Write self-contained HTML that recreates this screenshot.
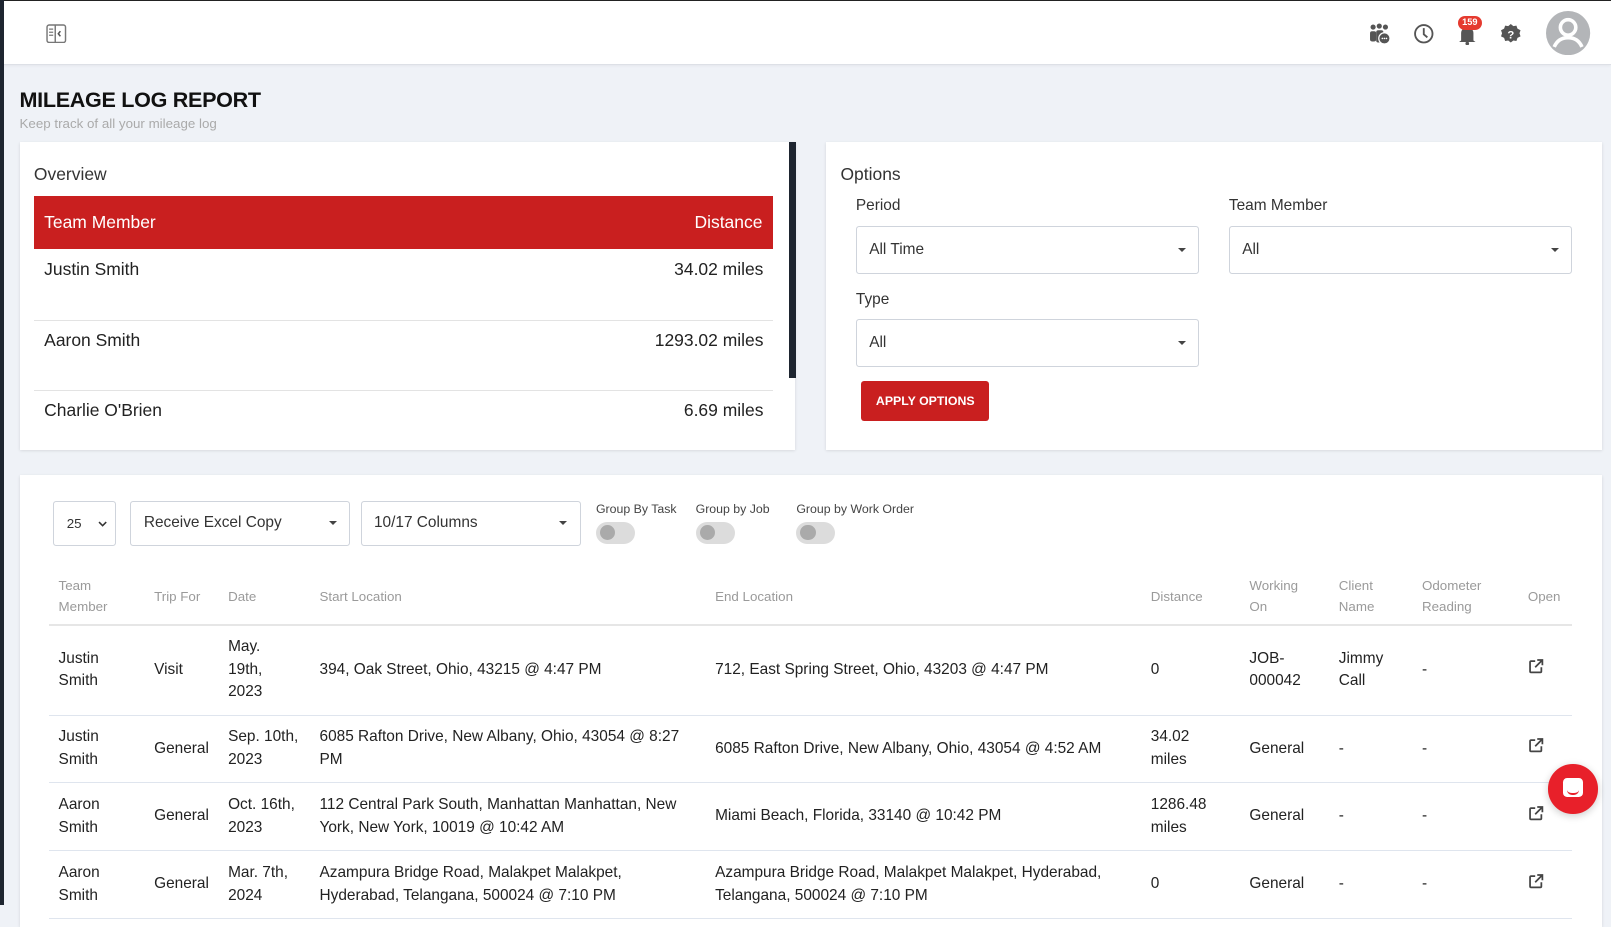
<!DOCTYPE html>
<html><head><meta charset="utf-8">
<style>
html{zoom:1.0275}
body{margin:0;width:1568px;height:881px;overflow:hidden;background:#eff2f7;font-family:"Liberation Sans",Arial,sans-serif;position:relative;color:#222}
.abs{position:absolute}
.top{left:0;top:0;width:1568px;height:63px;background:#fff;border-top:1px solid #222;border-bottom:1px solid #dde0e6;box-sizing:border-box;box-shadow:0 1px 3px rgba(0,0,0,.06)}
.strip{left:0;top:0;width:4px;height:881px;background:#1e2530;z-index:5}
.card{background:#fff;box-shadow:0 1px 3px rgba(0,0,0,.12)}
.sel{position:absolute;border:1px solid #cfd4dc;border-radius:3px;background:#fff;box-sizing:border-box;font-size:15px;color:#333;padding-left:12px;display:flex;align-items:center}
.sel .car{position:absolute;right:12px;top:50%;margin-top:-2px;border-left:4px solid transparent;border-right:4px solid transparent;border-top:4px solid #444}
table{border-collapse:collapse;table-layout:fixed;position:absolute;left:48px;top:555px;width:1482px;font-size:15px}
td,th{padding:0 4px 0 9px;text-align:left;vertical-align:middle;line-height:22px}
th{font-weight:normal;color:#9a9a9a;font-size:13px;line-height:20px;height:52px;border-bottom:2px solid #e6e6e6}
th.w,td.w{padding-right:30px}
tr.r td{border-bottom:1px solid #dfe5ee}
.tg{position:absolute;width:38px;height:21px;border-radius:11px;background:#dcdcdc}
.tg:after{content:"";position:absolute;left:4px;top:3px;width:15px;height:15px;border-radius:50%;background:#aaa}
.tl{position:absolute;font-size:12px;color:#444;top:489px}
</style></head><body>
<div class="abs strip"></div>
<div class="abs top"></div>
<svg class="abs" style="left:45px;top:23px" width="20" height="19" viewBox="0 0 20 19"><rect x="1" y="1" width="18" height="17" rx="2" fill="none" stroke="#777" stroke-width="1.4"/><line x1="9" y1="1" x2="9" y2="18" stroke="#777" stroke-width="1.4"/><path d="M3 5h4M3 8h4M3 11h4" stroke="#777" stroke-width="1.2"/><path d="M14 7l-2 2.5 2 2.5" fill="none" stroke="#555" stroke-width="1.5"/></svg>
<svg class="abs" style="left:1332px;top:22px" width="22" height="22" viewBox="0 0 22 22"><circle cx="4" cy="4" r="2.5" fill="#555"/><circle cx="10" cy="3" r="2.5" fill="#555"/><circle cx="16" cy="4" r="2.5" fill="#555"/><rect x="1" y="8" width="6" height="10" rx="2" fill="#555"/><rect x="7" y="7" width="7" height="12" rx="2" fill="#555"/><circle cx="15" cy="15" r="5.5" fill="#555" stroke="#fff" stroke-width="1.2"/><circle cx="13" cy="15" r=".8" fill="#fff"/><circle cx="15" cy="15" r=".8" fill="#fff"/><circle cx="17" cy="15" r=".8" fill="#fff"/></svg>
<svg class="abs" style="left:1375px;top:22px" width="21" height="21" viewBox="0 0 21 21"><circle cx="10.5" cy="10.5" r="8.5" fill="none" stroke="#555" stroke-width="1.8"/><path d="M10.5 5v6l3.5 3" fill="none" stroke="#555" stroke-width="1.8"/></svg>
<svg class="abs" style="left:1418px;top:22px" width="20" height="22" viewBox="0 0 20 22"><path d="M4 17V10a6 6 0 0 1 12 0v7l2 1.5H2z" fill="#555"/><circle cx="10" cy="20" r="1.8" fill="#555"/></svg>
<div class="abs" style="left:1419px;top:16px;background:#e53a2f;color:#fff;font-size:9px;font-weight:bold;border-radius:8px;padding:1px 4px;line-height:11px">159</div>
<svg class="abs" style="left:1460px;top:22px" width="21" height="21" viewBox="0 0 21 21"><path d="M10.5 1l2.5 2 3-.5 1 3 3 1.5-1 3 1 3-3 1.5-1 3-3-.5-2.5 2-2.5-2-3 .5-1-3-3-1.5 1-3-1-3 3-1.5 1-3 3 .5z" fill="#555"/><text x="10.5" y="15" font-size="11" font-weight="bold" fill="#fff" text-anchor="middle" font-family="Liberation Sans">?</text></svg>
<svg class="abs" style="left:1505px;top:11px" width="43" height="43" viewBox="0 0 43 43"><circle cx="21.5" cy="21.5" r="21.5" fill="#b3b5b8"/><circle cx="21.5" cy="16" r="7.5" fill="none" stroke="#fff" stroke-width="3.5"/><path d="M8 35c3-7 8-9 13.5-9s10.5 2 13.5 9" fill="none" stroke="#fff" stroke-width="3.5"/></svg>

<div class="abs" style="left:19px;top:85px;font-size:21px;font-weight:bold;color:#111;letter-spacing:-0.3px">MILEAGE LOG REPORT</div>
<div class="abs" style="left:19px;top:113px;font-size:13px;color:#aaa">Keep track of all your mileage log</div>

<div class="abs card" style="left:19px;top:138px;width:755px;height:300px"></div>
<div class="abs" style="left:768px;top:138px;width:7px;height:230px;background:#1e2530"></div>
<div class="abs" style="left:33px;top:160px;font-size:17px;color:#333">Overview</div>
<div class="abs" style="left:33px;top:191px;width:719px;height:51px;background:#c91f1f;color:#fff;font-size:17px"><span class="abs" style="left:10px;top:15px">Team Member</span><span class="abs" style="right:10px;top:15px">Distance</span></div>
<div class="abs" style="left:43px;top:252px;font-size:17px">Justin Smith</div><div class="abs" style="right:825px;top:252px;font-size:17px">34.02 miles</div>
<div class="abs" style="left:33px;top:311px;width:719px;height:1px;background:#e3e3e3"></div>
<div class="abs" style="left:43px;top:321px;font-size:17px">Aaron Smith</div><div class="abs" style="right:825px;top:321px;font-size:17px">1293.02 miles</div>
<div class="abs" style="left:33px;top:380px;width:719px;height:1px;background:#e3e3e3"></div>
<div class="abs" style="left:43px;top:389px;font-size:17px">Charlie O'Brien</div><div class="abs" style="right:825px;top:389px;font-size:17px">6.69 miles</div>

<div class="abs card" style="left:804px;top:138px;width:755px;height:300px"></div>
<div class="abs" style="left:818px;top:160px;font-size:17px;color:#333">Options</div>
<div class="abs" style="left:833px;top:192px;font-size:15px;color:#333">Period</div>
<div class="abs" style="left:1196px;top:192px;font-size:15px;color:#333">Team Member</div>
<div class="sel" style="left:833px;top:220px;width:334px;height:47px">All Time<span class="car"></span></div>
<div class="sel" style="left:1196px;top:220px;width:334px;height:47px">All<span class="car"></span></div>
<div class="abs" style="left:833px;top:283px;font-size:15px;color:#333">Type</div>
<div class="sel" style="left:833px;top:310px;width:334px;height:47px">All<span class="car"></span></div>
<div class="abs" style="left:838px;top:371px;width:125px;height:39px;background:#c91f1f;border-radius:3px;color:#fff;font-size:12px;font-weight:bold;text-align:center;line-height:39px">APPLY OPTIONS</div>

<div class="abs card" style="left:19px;top:462px;width:1540px;height:440px"></div>
<div class="sel" style="left:52px;top:488px;width:61px;height:43px;font-size:13px">25<svg class="abs" style="right:8px;top:18px" width="9" height="6" viewBox="0 0 9 6"><path d="M1 1l3.5 3.5L8 1" fill="none" stroke="#333" stroke-width="1.5"/></svg></div>
<div class="sel" style="left:127px;top:488px;width:214px;height:43px">Receive Excel Copy<span class="car"></span></div>
<div class="sel" style="left:351px;top:488px;width:214px;height:43px">10/17 Columns<span class="car"></span></div>
<div class="tl" style="left:580px">Group By Task</div><div class="tg" style="left:580px;top:508px"></div>
<div class="tl" style="left:677px">Group by Job</div><div class="tg" style="left:677px;top:508px"></div>
<div class="tl" style="left:775px">Group by Work Order</div><div class="tg" style="left:775px;top:508px"></div>

<table>
<colgroup><col style="width:93px"><col style="width:72px"><col style="width:89px"><col style="width:385px"><col style="width:424px"><col style="width:96px"><col style="width:87px"><col style="width:81px"><col style="width:103px"><col style="width:52px"></colgroup>
<tr><th class="w">Team Member</th><th>Trip For</th><th>Date</th><th>Start Location</th><th>End Location</th><th>Distance</th><th class="w">Working On</th><th class="w">Client Name</th><th>Odometer Reading</th><th>Open</th></tr>
<tr class="r" style="height:88px"><td class="w">Justin Smith</td><td>Visit</td><td class="w">May. 19th, 2023</td><td>394, Oak Street, Ohio, 43215 @ 4:47 PM</td><td>712, East Spring Street, Ohio, 43203 @ 4:47 PM</td><td>0</td><td>JOB-000042</td><td>Jimmy Call</td><td>-</td><td><svg width="16" height="16" viewBox="0 0 16 16"><path d="M7 3H3a1 1 0 0 0-1 1v9a1 1 0 0 0 1 1h9a1 1 0 0 0 1-1V9" fill="none" stroke="#444" stroke-width="1.7"/><path d="M9 2h5v5M14 2L7 9" fill="none" stroke="#444" stroke-width="1.7"/></svg></td></tr>
<tr class="r" style="height:66px"><td class="w">Justin Smith</td><td>General</td><td>Sep. 10th, 2023</td><td>6085 Rafton Drive, New Albany, Ohio, 43054 @ 8:27 PM</td><td>6085 Rafton Drive, New Albany, Ohio, 43054 @ 4:52 AM</td><td class="w">34.02 miles</td><td>General</td><td>-</td><td>-</td><td><svg width="16" height="16" viewBox="0 0 16 16"><path d="M7 3H3a1 1 0 0 0-1 1v9a1 1 0 0 0 1 1h9a1 1 0 0 0 1-1V9" fill="none" stroke="#444" stroke-width="1.7"/><path d="M9 2h5v5M14 2L7 9" fill="none" stroke="#444" stroke-width="1.7"/></svg></td></tr>
<tr class="r" style="height:66px"><td class="w">Aaron Smith</td><td>General</td><td>Oct. 16th, 2023</td><td>112 Central Park South, Manhattan Manhattan, New York, New York, 10019 @ 10:42 AM</td><td>Miami Beach, Florida, 33140 @ 10:42 PM</td><td class="w">1286.48 miles</td><td>General</td><td>-</td><td>-</td><td><svg width="16" height="16" viewBox="0 0 16 16"><path d="M7 3H3a1 1 0 0 0-1 1v9a1 1 0 0 0 1 1h9a1 1 0 0 0 1-1V9" fill="none" stroke="#444" stroke-width="1.7"/><path d="M9 2h5v5M14 2L7 9" fill="none" stroke="#444" stroke-width="1.7"/></svg></td></tr>
<tr class="r" style="height:66px"><td class="w">Aaron Smith</td><td>General</td><td>Mar. 7th, 2024</td><td>Azampura Bridge Road, Malakpet Malakpet, Hyderabad, Telangana, 500024 @ 7:10 PM</td><td>Azampura Bridge Road, Malakpet Malakpet, Hyderabad, Telangana, 500024 @ 7:10 PM</td><td>0</td><td>General</td><td>-</td><td>-</td><td><svg width="16" height="16" viewBox="0 0 16 16"><path d="M7 3H3a1 1 0 0 0-1 1v9a1 1 0 0 0 1 1h9a1 1 0 0 0 1-1V9" fill="none" stroke="#444" stroke-width="1.7"/><path d="M9 2h5v5M14 2L7 9" fill="none" stroke="#444" stroke-width="1.7"/></svg></td></tr>
</table>
<div class="abs" style="left:1507px;top:744px;width:48px;height:48px;border-radius:50%;background:#e8202a;box-shadow:0 2px 8px rgba(0,0,0,.2)"><div class="abs" style="left:14px;top:13px;width:20px;height:19px;background:#fff;border-radius:4px"></div><div class="abs" style="left:18px;top:25px;width:12px;height:3px;border-bottom:2px solid #e8202a;border-radius:0 0 6px 6px"></div></div>
</body></html>
